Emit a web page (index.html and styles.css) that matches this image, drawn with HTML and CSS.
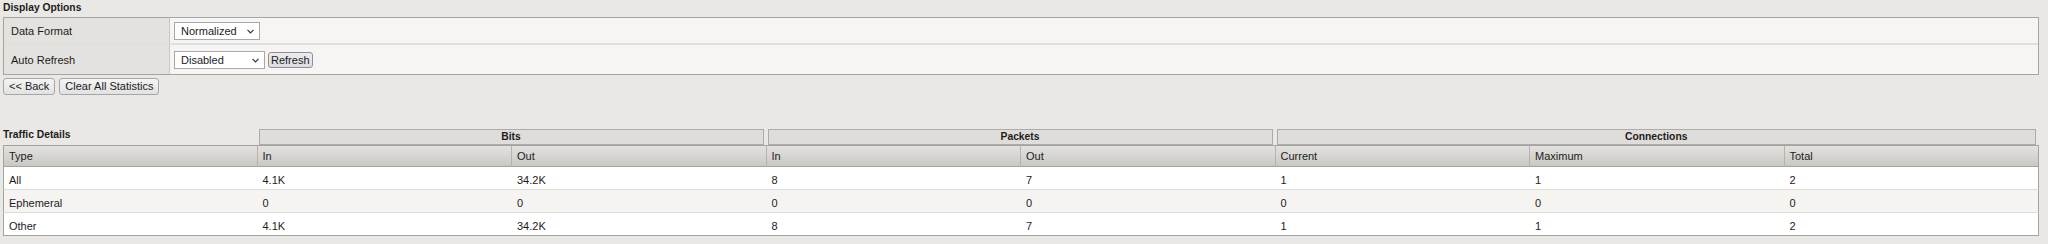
FILE: index.html
```html
<!DOCTYPE html>
<html>
<head>
<meta charset="utf-8">
<title>Traffic Statistics</title>
<link rel="stylesheet" href="styles.css">
</head>
<body>
<div class="section-title">Display Options</div>
<table class="opts">
  <tr class="r1">
    <td class="lbl">Data Format</td>
    <td class="val">
      <div class="ctl">
        <span class="sel w-norm">
          <select><option>Normalized</option><option>Unformatted</option></select>
          <svg class="chev" width="7" height="5" viewBox="0 0 7 5"><polyline points="0.5,0.8 3.5,3.8 6.5,0.8" fill="none" stroke="#333" stroke-width="1.2"/></svg>
        </span>
      </div>
    </td>
  </tr>
  <tr class="r2">
    <td class="lbl">Auto Refresh</td>
    <td class="val">
      <div class="ctl">
        <span class="sel w-dis">
          <select><option>Disabled</option><option>20 seconds</option></select>
          <svg class="chev" width="7" height="5" viewBox="0 0 7 5"><polyline points="0.5,0.8 3.5,3.8 6.5,0.8" fill="none" stroke="#333" stroke-width="1.2"/></svg>
        </span>
        <button class="btn btn-refresh">Refresh</button>
      </div>
    </td>
  </tr>
</table>
<div class="actions">
  <button class="btn">&lt;&lt; Back</button>
  <button class="btn">Clear All Statistics</button>
</div>
<table class="traffic">
  <tr class="grp">
    <td class="grp-title">Traffic Details</td>
    <td colspan="2"><div class="g">Bits</div></td>
    <td colspan="2"><div class="g">Packets</div></td>
    <td colspan="3"><div class="g">Connections</div></td>
  </tr>
  <tr class="hdr">
    <th>Type</th><th>In</th><th>Out</th><th>In</th><th>Out</th><th>Current</th><th>Maximum</th><th>Total</th>
  </tr>
  <tr class="row">
    <td>All</td><td>4.1K</td><td>34.2K</td><td>8</td><td>7</td><td>1</td><td>1</td><td>2</td>
  </tr>
  <tr class="row alt">
    <td>Ephemeral</td><td>0</td><td>0</td><td>0</td><td>0</td><td>0</td><td>0</td><td>0</td>
  </tr>
  <tr class="row last">
    <td>Other</td><td>4.1K</td><td>34.2K</td><td>8</td><td>7</td><td>1</td><td>1</td><td>2</td>
  </tr>
</table>
</body>
</html>
```
FILE: styles.css
```css
html, body {
  margin: 0;
  background: #eae8e4;
}
body {
  padding: 0 9px 0 3px;
  font-family: "Liberation Sans", Arial, sans-serif;
  font-size: 11px;
  color: #1c1c1c;
}
.section-title {
  font-weight: bold;
  font-size: 10.3px;
  line-height: 14px;
  padding-top: 1px;
  margin-bottom: 2px;
}
.opts {
  width: 100%;
  border-collapse: separate;
  border-spacing: 0;
  border: 1px solid #a6a5a1;
}
.opts td {
  padding: 0;
  vertical-align: middle;
}
.opts .r1 td {
  height: 25px;
  border-bottom: 2px solid #e1e0dc;
}
.opts .r2 td {
  height: 29px;
}
.opts .lbl {
  width: 158px;
  padding-left: 7px;
  background: #e4e2de;
  border-right: 1px solid #cac8c4;
}
.opts .val {
  padding-left: 4px;
  background: #f6f5f3;
}
.ctl {
  display: flex;
  align-items: center;
  gap: 3px;
}
.sel {
  position: relative;
  display: inline-block;
  height: 18px;
}
.sel select {
  appearance: none;
  -webkit-appearance: none;
  box-sizing: border-box;
  height: 18px;
  margin: 0;
  padding: 0 0 0 6px;
  border: 1px solid #a8a8a8;
  border-radius: 0;
  background: #fff;
  font-family: "Liberation Sans", Arial, sans-serif;
  font-size: 11px;
  color: #1c1c1c;
}
.w-norm select { width: 86px; }
.w-dis select { width: 91px; }
.chev {
  position: absolute;
  right: 6px;
  top: 7px;
  pointer-events: none;
}
.btn {
  box-sizing: border-box;
  height: 17px;
  margin: 0;
  padding: 0 5px;
  border: 1px solid #a6a6a6;
  border-radius: 3px;
  background: linear-gradient(#f4f4f4, #e2e2e2);
  font-family: "Liberation Sans", Arial, sans-serif;
  font-size: 11px;
  color: #1c1c1c;
  line-height: 15px;
}
.btn-refresh {
  height: 16px;
  padding: 0 2px;
  border-color: #8e8e96;
  background: linear-gradient(#ececf0, #dcdce2);
}
.actions {
  display: flex;
  gap: 4px;
  margin-top: 3px;
}
.traffic {
  width: 100%;
  table-layout: fixed;
  border-collapse: separate;
  border-spacing: 0;
  margin-top: 34px;
}
.traffic td, .traffic th {
  padding: 0;
}
.grp td {
  vertical-align: top;
  padding: 0 3px 0 1px;
}
.grp .grp-title {
  padding: 0;
  font-weight: bold;
  font-size: 10.3px;
  line-height: 12px;
  white-space: nowrap;
}
.grp .g {
  height: 14px;
  line-height: 14px;
  border: 1px solid #adaba7;
  background: #dfddd9;
  text-align: center;
  font-weight: bold;
  font-size: 10.3px;
}
.hdr th {
  height: 20px;
  text-align: left;
  font-weight: normal;
  padding-left: 5px;
  background: linear-gradient(#e3e2de, #cac8c4);
  border-top: 1px solid #a5a3a0;
  border-bottom: 1px solid #a5a3a0;
  border-right: 1px solid #b5b3af;
  white-space: nowrap;
}
.hdr th:first-child {
  border-left: 1px solid #a5a3a0;
}
.hdr th:last-child {
  border-right: 1px solid #a5a3a0;
}
.row td {
  height: 19px;
  padding: 3px 0 0 5px;
  background: #fff;
  border-bottom: 1px solid #dedcd8;
  vertical-align: middle;
}
.row.alt td {
  background: #f5f4f1;
}
.row td:first-child {
  border-left: 1px solid #a5a3a0;
}
.row td:last-child {
  border-right: 1px solid #a5a3a0;
}
.row.last td {
  border-bottom: 1px solid #a5a3a0;
}
```
